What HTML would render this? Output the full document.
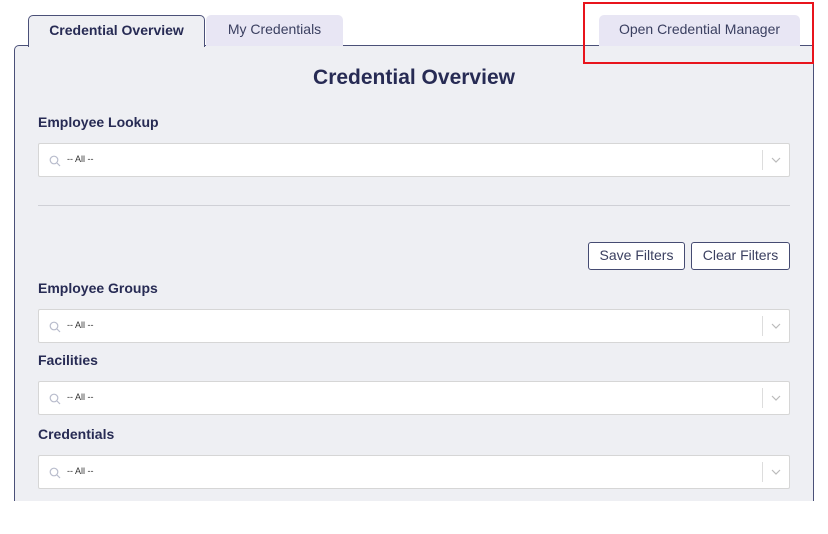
<!DOCTYPE html><html><head><style>
body{margin:0;width:828px;height:534px;background:#fff;font-family:"Liberation Sans",sans-serif;position:relative;overflow:hidden}
.a{position:absolute;box-sizing:border-box}
.panel{left:14px;top:45px;width:800px;height:456px;background:#eeeff3;border:1.5px solid #4a5078;border-bottom:none;border-radius:5px 0 0 0}
.tab{top:15px;height:31px;text-align:center;font-size:14px;line-height:29px;color:#3a3f60;border-radius:5px 5px 0 0}
.lbl{left:38px;font-size:14px;font-weight:bold;color:#272b54}
.inp{left:38px;width:752px;height:34px;background:#fff;border:1px solid #d6d6d6;border-radius:2px}
.inp .t{position:absolute;left:28px;top:10px;font-size:9px;color:#333}
.inp svg{position:absolute;left:10px;top:11px}
.inp .sep{position:absolute;right:26px;top:6px;width:1px;height:20px;background:#ddd}
.inp .ch{position:absolute;right:8px;top:12px}
.btn{top:242px;height:28px;border:1.5px solid #454b72;border-radius:3px;background:#fff;font-size:14px;color:#3a3f60;text-align:center;line-height:25px}
</style></head><body>
<div class="a panel"></div>
<div class="a tab" style="left:28px;width:177px;background:#eeeff3;border:1.5px solid #4a5078;border-bottom:none;height:32px;font-weight:bold;color:#272b54;line-height:28px">Credential Overview</div>
<div class="a tab" style="left:206px;width:137px;background:#e8e6f4">My Credentials</div>
<div class="a tab" style="left:599px;width:201px;background:#e8e6f4">Open Credential Manager</div>
<div class="a" style="left:583px;top:2px;width:231px;height:62px;border:2px solid #e8141c"></div>
<div class="a" style="left:14px;top:66px;width:800px;text-align:center;font-size:21px;font-weight:bold;color:#272b54">Credential Overview</div>
<div class="a lbl" style="top:114px">Employee Lookup</div>
<div class="a lbl" style="top:280px">Employee Groups</div>
<div class="a lbl" style="top:352px">Facilities</div>
<div class="a lbl" style="top:426px">Credentials</div>
<div class="a" style="left:38px;top:205px;width:752px;height:1px;background:#cfd0d6"></div>
<div class="a btn" style="left:588px;width:97px">Save Filters</div>
<div class="a btn" style="left:691px;width:99px">Clear Filters</div>
<div class="a inp" style="top:143px"><svg width="12" height="12" viewBox="0 0 12 12"><circle cx="5" cy="5" r="3.8" fill="none" stroke="#b8bccc" stroke-width="1.2"/><path d="M8 8l3 3" stroke="#b8bccc" stroke-width="1.2"/></svg><span class="t">-- All --</span><div class="sep"></div><svg class="ch" width="10" height="8" viewBox="0 0 10 8" style="left:auto;top:12px"><path d="M1 2l4 4 4-4" fill="none" stroke="#bbb" stroke-width="1.2"/></svg></div>
<div class="a inp" style="top:309px"><svg width="12" height="12" viewBox="0 0 12 12"><circle cx="5" cy="5" r="3.8" fill="none" stroke="#b8bccc" stroke-width="1.2"/><path d="M8 8l3 3" stroke="#b8bccc" stroke-width="1.2"/></svg><span class="t">-- All --</span><div class="sep"></div><svg class="ch" width="10" height="8" viewBox="0 0 10 8" style="left:auto;top:12px"><path d="M1 2l4 4 4-4" fill="none" stroke="#bbb" stroke-width="1.2"/></svg></div>
<div class="a inp" style="top:381px"><svg width="12" height="12" viewBox="0 0 12 12"><circle cx="5" cy="5" r="3.8" fill="none" stroke="#b8bccc" stroke-width="1.2"/><path d="M8 8l3 3" stroke="#b8bccc" stroke-width="1.2"/></svg><span class="t">-- All --</span><div class="sep"></div><svg class="ch" width="10" height="8" viewBox="0 0 10 8" style="left:auto;top:12px"><path d="M1 2l4 4 4-4" fill="none" stroke="#bbb" stroke-width="1.2"/></svg></div>
<div class="a inp" style="top:455px"><svg width="12" height="12" viewBox="0 0 12 12"><circle cx="5" cy="5" r="3.8" fill="none" stroke="#b8bccc" stroke-width="1.2"/><path d="M8 8l3 3" stroke="#b8bccc" stroke-width="1.2"/></svg><span class="t">-- All --</span><div class="sep"></div><svg class="ch" width="10" height="8" viewBox="0 0 10 8" style="left:auto;top:12px"><path d="M1 2l4 4 4-4" fill="none" stroke="#bbb" stroke-width="1.2"/></svg></div>
</body></html>
